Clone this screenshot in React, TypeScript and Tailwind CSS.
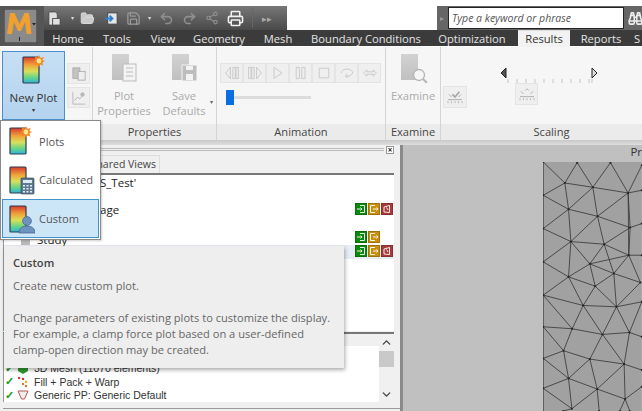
import { Binoculars, ChevronDown, ChevronUp, FolderOpen, Printer, Redo2, Save, Share2, Undo2 } from "lucide-react";

const nodes: Record<string, [number, number]> = {
  A: [705, 128], B: [789, 141], C: [895, 158], D: [716, 207], E: [803, 228], F: [901, 262], G: [723, 304],
  H: [823, 312], I: [897, 345], J: [780, 371], K: [852, 400], L: [932, 427], M: [716, 410], N: [796, 438],
  O: [760, 496], P: [860, 500], Q: [936, 485], R: [727, 566], S: [818, 583], T: [899, 577], U: [701, 632],
  V: [780, 657], W: [883, 672], X: [716, 715], Y: [802, 747], Z: [886, 777], a: [726, 806],
  t0: [640, 65], t1: [742, 67], t2: [842, 67], t3: [936, 75], e1: [640, 165], e2: [640, 265], e3: [640, 365],
  e4: [640, 465], e5: [640, 560], e6: [640, 655], e7: [640, 745], r1: [936, 150], r2: [936, 250], r3: [936, 345],
  r4: [936, 590], r5: [936, 690], r6: [936, 740], b1: [700, 813], b2: [808, 813], b3: [870, 813], b4: [900, 813],
};

const edges =
  "t0-A t1-A t1-B t2-B t2-C t3-C e1-A e1-D A-D A-B B-C B-D B-E C-E C-F E-D E-F D-G D-e2 e2-G G-E E-H F-H G-H H-I F-I C-I G-e3 e3-M M-G G-J H-J H-K J-K J-I I-K K-L I-L M-J J-N K-N M-N M-e4 e4-O M-O O-N N-P K-P L-P P-Q O-P e4-R O-R R-e5 R-U R-S O-S P-S P-T S-T Q-T e5-U U-e6 U-V S-V U-X V-X S-W T-W V-W e6-X X-e7 X-Y V-Y W-Y W-Z Y-Z X-a e7-a I-r3 F-r2 C-r1 T-r4 W-r5 Z-r6 a-b1 Y-b2 Z-b3 Z-b4 Y-a";

function Mesh() {
  return (
    <svg viewBox="640 65 296 748" className="h-[249px] w-[99px] shrink-0">
      <rect x="640" y="65" width="296" height="748" fill="#a1a1a1" />
      <path d="M640 65V813" stroke="#444" strokeWidth="3" fill="none" />
      {edges.split(" ").map((e) => {
        const [p, q] = e.split("-");
        return <line key={e} x1={nodes[p][0]} y1={nodes[p][1]} x2={nodes[q][0]} y2={nodes[q][1]} stroke="#333" strokeWidth="2.4" />;
      })}
      {Object.values(nodes).map(([x, y]) => (
        <circle key={`${x}-${y}`} cx={x} cy={y} r="3" fill="#222" />
      ))}
    </svg>
  );
}

function Rainbow({ id }: { id: string }) {
  return (
    <linearGradient id={id} x1="0" y1="0" x2="0" y2="1">
      <stop offset="0" stopColor="#d9392f" />
      <stop offset="0.3" stopColor="#f0a23a" />
      <stop offset="0.55" stopColor="#d8e05a" />
      <stop offset="0.8" stopColor="#62d48a" />
      <stop offset="1" stopColor="#2fb4dc" />
    </linearGradient>
  );
}

function Burst({ x, y }: { x: number; y: number }) {
  return (
    <g transform={`translate(${x} ${y})`}>
      <path d="M0-6 1.6-3 5-4 3.4-1 6 0 3.4 1.4 4.4 4.6 1.4 3.4 0 6-1.4 3.4-4.4 4.6-3.4 1.4-6 0-3.4-1-4.4-4.4-1.4-3.4Z" fill="#ef8a2c" />
      <circle r="2.4" fill="#ffe68a" />
    </g>
  );
}

function PlotIcon({ kind, id }: { kind: "burst" | "calc" | "user"; id: string }) {
  return (
    <svg viewBox="0 0 28 30" className="h-[30px] w-[28px] shrink-0">
      <defs>
        <Rainbow id={id} />
      </defs>
      <rect x="3" y="2" width="16" height="26" rx="1" fill={`url(#${id})`} stroke="#2c3c4c" strokeWidth="1.2" />
      {kind === "burst" && <Burst x={19} y={6} />}
      {kind === "calc" && (
        <g>
          <rect x="14" y="13" width="13" height="16" rx="1" fill="#5b7a94" stroke="#334" strokeWidth="0.6" />
          <rect x="16" y="15" width="9" height="3" fill="#dfe9f0" />
          <path d="M16 20h2v1.6h-2zM19.5 20h2v1.6h-2zM23 20h2v1.6h-2zM16 23h2v1.6h-2zM19.5 23h2v1.6h-2zM23 23h2v1.6h-2zM16 26h2v1.6h-2zM19.5 26h2v1.6h-2zM23 26h2v1.6h-2z" fill="#e8eef3" />
        </g>
      )}
      {kind === "user" && (
        <g fill="#6f93c0" stroke="#3d5f8c" strokeWidth="0.7">
          <circle cx="20" cy="17" r="4.4" />
          <path d="M12 29c0-5 3.5-7 8-7s8 2 8 7Z" />
        </g>
      )}
    </svg>
  );
}

function GhostBtn({ className, children }: { className: string; children?: React.ReactNode }) {
  return <div className={`flex items-center justify-center border border-[#e4e4e4] bg-[#efefef] ${className}`}>{children}</div>;
}

function GhostPage({ children }: { children?: React.ReactNode }) {
  return (
    <svg viewBox="0 0 30 30" className="h-[30px] w-[30px]">
      <defs>
        <linearGradient id="page" x1="0" y1="0" x2="0" y2="1">
          <stop offset="0" stopColor="#d2d2d2" />
          <stop offset="1" stopColor="#c0c0c0" />
        </linearGradient>
      </defs>
      <rect x="3" y="1" width="17" height="26" fill="url(#page)" />
      {children}
    </svg>
  );
}

function Badge({ color, kind }: { color: string; kind: "in" | "out" | "x" }) {
  return (
    <div className={`flex h-[12px] w-[12px] items-center justify-center border border-[#00000030] ${color}`}>
      <svg viewBox="0 0 10 10" className="h-[10px] w-[10px]" fill="none" stroke="#fff" strokeWidth="0.9">
        {kind === "in" && <path d="M4 1.5h4.5v7H4M1 5h5M4.5 3.5 6 5 4.500 6.5" />}
        {kind === "out" && <path d="M6 1.500H1.500v7H6M4 5h5M7.500 3.500 9 5 7.500 6.500" />}
        {kind === "x" && <path d="M2 3 7.500 1.500v7L2 8ZM4.500 3.500 6 6" />}
      </svg>
    </div>
  );
}

function Badges({ count }: { count: number }) {
  return (
    <div className="ml-auto flex gap-[1px] self-start pr-[1px]">
      <Badge color="bg-[#0d8a0d]" kind="in" />
      <Badge color="bg-[#c98f10]" kind="out" />
      {count === 3 ? <Badge color="bg-[#a83a3a]" kind="x" /> : <div className="w-[12px]" />}
    </div>
  );
}

function Tab({ w, label }: { w: string; label: string }) {
  return <div className={`flex items-center justify-center pt-[1px] text-[#e4e4e4] ${w}`}>{label}</div>;
}

function Group({ w, label, children }: { w: string; label: string; children?: React.ReactNode }) {
  return (
    <div className={`flex shrink-0 flex-col border-r border-[#d4d4d4] ${w}`}>
      <div className="h-[77px]">{children}</div>
      <div className="flex h-[16px] items-center justify-center bg-[#ebebeb] text-[#444]">{label}</div>
    </div>
  );
}

function MenuItem({ kind, label, selected }: { kind: "burst" | "calc" | "user"; label: string; selected?: boolean }) {
  return (
    <div className={`flex h-[39px] items-center gap-[4px] ${selected ? "border border-[#3f94cc] bg-[#cde6f7] pl-[4px]" : "pl-[5px]"}`}>
      <PlotIcon kind={kind} id={`menu-${kind}`} />
      <span className="text-[#555]">{label}</span>
    </div>
  );
}

export default function App() {
  return (
    <div className="relative flex h-[411px] w-[642px] flex-col overflow-hidden bg-white font-['Open_Sans',sans-serif] text-[11.1px] leading-none">
      {/* title bar + tabs */}
      <div className="flex h-[47px] shrink-0">
        <div className="flex w-[44px] shrink-0 flex-col pt-[6px]">
          <div className="flex h-[40px] items-center bg-[#555] pl-[4px]">
            <svg viewBox="0 0 33 34" className="h-[34px] w-[33px]">
              <rect width="33" height="34" fill="#8a8a8a" stroke="#333" />
              <path d="M3 25 6 4h4.500l5 11 5-11H25l2.500 21h-5L21 13l-4 9h-3L10 13 8 25Z" fill="#f0a02e" />
              <path d="M15.500 28v4" stroke="#222" />
              <path d="M28 14h4l-2 2.500Z" fill="#222" />
            </svg>
          </div>
        </div>
        <div className="flex min-w-0 flex-1 flex-col">
          <div className="flex h-[30px] shrink-0 items-end">
            <div className="flex h-[24px] w-[243px] shrink-0 items-center bg-gradient-to-b from-[#777] to-[#4a4a4a] pl-[4px] text-[#dcdcdc]">
              <svg viewBox="0 0 14 16" className="h-[15px] w-[13px]" fill="#e0e0e0" stroke="#444" strokeWidth="0.8">
                <path d="M1 1h7l2 2v5H5v7H1Z" />
                <path d="M5 8h8v7H5Z" />
              </svg>
              <span className="ml-[10px] text-[6px]">▾</span>
              <FolderOpen size={15} className="ml-[6px]" fill="#c9c9c9" strokeWidth={1.5} />
              <svg viewBox="0 0 16 16" className="ml-[9px] h-[15px] w-[15px]">
                <rect x="4" y="2" width="10" height="12" fill="#e6e6e6" stroke="#444" />
                <path d="M1 8h7M6 5l3 3-3 3" stroke="#2b7fd0" strokeWidth="2" fill="none" />
              </svg>
              <Save size={15} className="ml-[7px] text-[#9a9a9a]" />
              <span className="ml-[7px] text-[6px]">▾</span>
              <Undo2 size={15} className="ml-[8px] text-[#8f8f8f]" strokeWidth={2.5} />
              <Redo2 size={15} className="ml-[8px] text-[#8f8f8f]" strokeWidth={2.5} />
              <Share2 size={14} className="ml-[8px] text-[#8f8f8f]" />
              <Printer size={17} className="ml-[8px] text-[#f2f2f2]" strokeWidth={2.2} />
              <div className="ml-[8px] h-[20px] w-px bg-[#666]" />
              <span className="ml-[9px] text-[9px] text-[#aaa]">▸▸</span>
            </div>
            <div className="w-[150px] shrink-0" />
            <div className="flex h-[24px] flex-1 items-center bg-[#666]">
              <span className="ml-[3px] text-[8px] text-[#999]">▸</span>
              <div className="ml-[4px] flex h-[22px] w-[176px] shrink-0 items-center border border-[#222] bg-white pl-[3px] text-[10.5px] italic text-[#555]">
                Type a keyword or phrase
              </div>
              <Binoculars size={15} className="ml-[4px] text-[#eee]" strokeWidth={2.5} />
            </div>
          </div>
          <div className="flex h-[16px] bg-[#3b3b3b] text-[11.2px]">
            <Tab w="w-[48px]" label="Home" />
            <Tab w="w-[50px]" label="Tools" />
            <Tab w="w-[42px]" label="View" />
            <Tab w="w-[70px]" label="Geometry" />
            <Tab w="w-[48px]" label="Mesh" />
            <Tab w="w-[128px]" label="Boundary Conditions" />
            <Tab w="w-[84px]" label="Optimization" />
            <div className="ml-[4px] flex h-[17px] w-[52px] items-center justify-center border-t border-[#ddd] bg-[#f2f2f2] text-[#333]">Results</div>
            <Tab w="w-[62px]" label="Reports" />
            <Tab w="w-[10px]" label="S" />
          </div>
        </div>
      </div>

      {/* ribbon */}
      <div className="flex h-[93px] shrink-0 bg-[#f6f6f6]">
        <div className="flex w-[93px] shrink-0 flex-col border-r border-[#d4d4d4]">
          <div className="flex h-[77px] items-start pl-[2px] pt-[4px]">
            <div className="flex h-[69px] w-[63px] shrink-0 flex-col items-center border border-[#4a90d0] bg-gradient-to-b from-[#c6dff4] to-[#b4d3ee] pt-[3px] text-[11.5px] text-[#333]">
              <PlotIcon kind="burst" id="ribbon-burst" />
              <span className="mt-[7px]">New Plot</span>
              <span className="mt-[3px] text-[6px]">▾</span>
            </div>
            <div className="ml-[2px] mt-[12px] flex flex-col gap-[3px]">
              <GhostBtn className="h-[21px] w-[23px]">
                <svg viewBox="0 0 16 16" className="h-[14px] w-[14px]" fill="#c4c4c4" stroke="#aaa">
                  <rect x="1" y="1" width="8" height="12" />
                  <rect x="7" y="5" width="8" height="10" fill="#eee" />
                </svg>
              </GhostBtn>
              <GhostBtn className="h-[21px] w-[23px]">
                <svg viewBox="0 0 16 16" className="h-[14px] w-[14px]" fill="none" stroke="#b4b4b4">
                  <path d="M1 1v14h14M3 11l3-4 3 2 3-4" />
                  <circle cx="12" cy="4" r="2" fill="#bbb" />
                </svg>
              </GhostBtn>
            </div>
          </div>
          <div className="h-[16px] bg-[#ebebeb]" />
        </div>
        <Group w="w-[124px]" label="Properties">
          <div className="flex pt-[6px] text-center text-[#aaa]">
            <div className="flex w-[62px] shrink-0 flex-col items-center">
              <GhostPage>
                <rect x="14" y="11" width="13" height="17" fill="#f3f3f3" stroke="#bbb" />
                <path d="M17 15h7M17 19h7M17 23h7" stroke="#bbb" />
              </GhostPage>
              <span className="mt-[7px]">Plot</span>
              <span className="mt-[4px] whitespace-nowrap">Properties</span>
            </div>
            <div className="ml-[4px] flex w-[50px] shrink-0 flex-col items-center">
              <GhostPage>
                <rect x="13" y="12" width="15" height="16" fill="#bdbdbd" stroke="#f6f6f6" />
                <rect x="17" y="13" width="7" height="4" fill="#f3f3f3" />
                <rect x="17" y="21" width="7" height="6" fill="#f3f3f3" />
              </GhostPage>
              <span className="mt-[7px]">Save</span>
              <span className="mt-[4px]">Defaults</span>
            </div>
            <span className="ml-[1px] mt-[46px] text-[6px] text-[#666]">▾</span>
          </div>
        </Group>
        <Group w="w-[169px]" label="Animation">
          <div className="flex flex-col pl-[3px] pt-[16px]">
            <div className="flex">
              {[
                "M9 3 3 10l6 7ZM12 3h3v14h-3ZM16 3h3v14h-3Z",
                "M3 3h3v14H3ZM7 3h3v14H7ZM13 3l6 7-6 7Z",
                "M6 3l10 7-10 7Z",
                "M5 3h4v14H5ZM12 3h4v14h-4Z",
                "M5 4h12v12H5Z",
                "M4 10a7 5 0 0 1 14 0 7 5 0 0 1-8 4M11 11l-2 3 3 2",
                "M3 10l4-4v2.500h8V6l4 4-4 4v-2.500H7V14Z",
              ].map((d) => (
                <GhostBtn key={d} className="h-[20px] w-[23px]">
                  <svg viewBox="0 0 22 20" className="h-[16px] w-[18px]" fill="none" stroke="#c2c2c2">
                    <path d={d} />
                  </svg>
                </GhostBtn>
              ))}
            </div>
            <div className="ml-[6px] mt-[7px] flex items-center">
              <div className="h-[15px] w-[8px] bg-[#0a6ee0]" />
              <div className="h-[3px] w-[77px] bg-[#dcdcdc]" />
            </div>
          </div>
        </Group>
        <Group w="w-[55px]" label="Examine">
          <div className="flex flex-col items-center pt-[6px] text-[#aaa]">
            <GhostPage>
              <circle cx="21" cy="22" r="5.500" fill="#f6f6f6" stroke="#b4b4b4" strokeWidth="1.300" />
              <path d="M25 26l4 4" stroke="#b4b4b4" strokeWidth="2" />
            </GhostPage>
            <span className="mt-[7px]">Examine</span>
          </div>
        </Group>
        <div className="flex min-w-0 flex-1 flex-col">
          <div className="flex h-[77px] items-start pl-[2px] pt-[39px]">
            <GhostBtn className="h-[22px] w-[24px]">
              <svg viewBox="0 0 20 16" className="h-[14px] w-[18px]" fill="none" stroke="#a8a8a8">
                <path d="M2 11h16M2 13v2M6 13v2M10 13v2M14 13v2M18 13v2M3 5l3 3M17 5l-3 3" />
                <path d="M7 5l3 3 5-6" strokeWidth="2" />
              </svg>
            </GhostBtn>
            <div className="ml-[33px] -mt-[18px] flex flex-col">
              <svg viewBox="0 0 97 15" className="h-[15px] w-[97px]">
                <path d="M6 0 1 5l5 5Z" fill="#555" stroke="#222" />
                <path d="M92 0l5 5-5 5Z" fill="#ddd" stroke="#222" />
                <path d="M8 11v4M17 11v4M26 11v4M35 11v4M44 11v4M53 11v4M62 11v4M71 11v4M80 11v4M89 11v4M92 11v4" stroke="#c4c4c4" />
              </svg>
              <GhostBtn className="ml-[15px] h-[22px] w-[23px]">
                <svg viewBox="0 0 20 16" className="h-[14px] w-[18px]" fill="none" stroke="#a8a8a8">
                  <path d="M2 11h16M2 13v2M6 13v2M10 13v2M14 13v2M18 13v2M3 5l3 3M17 5l-3 3M8 4l2-2 2 2" />
                </svg>
              </GhostBtn>
            </div>
          </div>
          <div className="flex h-[16px] items-center justify-center bg-[#ebebeb] pl-[20px] text-[#444]">Scaling</div>
        </div>
      </div>

      <div className="h-[5px] shrink-0 bg-gradient-to-b from-[#c8c8c8] to-[#dedede]" />

      {/* panels */}
      <div className="flex min-h-0 flex-1">
        <div className="flex w-[400px] shrink-0 flex-col bg-[#f0f0f0] pl-[3px]">
          <div className="flex h-[9px] shrink-0 items-center pr-[6px]">
            <div className="h-[3px] flex-1 border-y border-[#bbb]" />
            <div className="ml-[2px] flex h-[8px] w-[8px] items-center justify-center border border-[#999] bg-white text-[8px] font-bold text-[#222]">×</div>
          </div>
          <div className="flex h-[19px] shrink-0 items-end pl-[82px] pt-[1px]">
            <div className="flex h-[18px] w-[75px] items-center justify-end border-x border-t border-[#ddd] pr-[3px] text-[10.5px] text-[#444]">Shared Views</div>
          </div>
          <div className="mr-[6px] h-[158px] shrink-0 border-t-2 border-l border-[#777] border-l-[#999] bg-white text-[11.5px] text-[#222]">
            <div className="flex h-[14px] items-center pl-[96px] pt-[1px]">S_Test'</div>
            <div className="h-[14px]" />
            <div className="flex h-[14px] items-center pl-[96px]">
              age
              <Badges count={3} />
            </div>
            <div className="h-[14px]" />
            <div className="flex h-[14px] items-center pl-[17px]">
              <div className="mr-[7px] mt-[4px] h-[10px] w-[9px] bg-[#bbb]" />
              <span className="mt-[4px]">Study</span>
              <Badges count={2} />
            </div>
            <div className="flex h-[14px] items-center bg-[#e8edf5]">
              <Badges count={3} />
            </div>
          </div>
          <div className="mr-[6px] mt-[1px] flex h-[70px] shrink-0 border-t-2 border-l border-[#777] border-l-[#999] bg-white font-['Liberation_Sans',sans-serif] text-[10.5px] text-[#333]">
            <div className="flex min-w-0 flex-1 flex-col">
              <div className="h-[12px] bg-[#f0f0f0]" />
              <div className="h-[17px]" />
              {[
                { label: "3D Mesh (11070 elements)", icon: "mesh" },
                { label: "Fill + Pack + Warp", icon: "fill" },
                { label: "Generic PP: Generic Default", icon: "pp" },
              ].map((row) => (
                <div key={row.label} className="flex h-[14px] items-center">
                  <span className="ml-[1px] w-[9px] text-center text-[11px] font-bold text-[#1a9a2a]">✓</span>
                  <svg viewBox="0 0 12 12" className="ml-[3px] h-[12px] w-[12px] shrink-0">
                    {row.icon === "mesh" && <path d="M6 1l5 3v5l-5 3-5-3V4Z" fill="#2f9a2f" />}
                    {row.icon === "fill" && (
                      <g fill="#d9752c">
                        <circle cx="2" cy="2" r="1.200" fill="#c33" />
                        <circle cx="6" cy="3" r="1.200" fill="#c33" />
                        <circle cx="9" cy="6" r="1.200" fill="#eab02c" />
                        <circle cx="6" cy="8" r="1.200" />
                        <circle cx="9" cy="10" r="1.200" />
                      </g>
                    )}
                    {row.icon === "pp" && <path d="M1 2h10L7.500 10h-3Z" fill="#eee" stroke="#b55" />}
                  </svg>
                  <span className="ml-[5px]">{row.label}</span>
                </div>
              ))}
            </div>
            <div className="flex w-[15px] shrink-0 flex-col items-center bg-[#f0f0f0] pt-[2px] text-[#444]">
              <ChevronUp size={13} strokeWidth={2.5} />
              <div className="mt-[2px] h-[16px] w-full bg-[#c9c9c9]" />
              <ChevronDown size={13} strokeWidth={2.5} className="mt-[21px]" />
            </div>
          </div>
          <div className="mt-[6px] h-[1px] shrink-0 bg-[#999]" />
        </div>
        <div className="flex min-w-0 flex-1 border-l-[3px] border-[#8a8a8a] bg-[#c0c0c0]">
          <div className="flex-1 pl-[140px] pt-[17px]">
            <Mesh />
          </div>
          <span className="absolute right-0 top-[146px] text-[11.5px] text-[#333]">Pr</span>
        </div>
      </div>

      {/* New Plot dropdown */}
      <div className="absolute left-0 top-[120px] flex h-[120px] w-[101px] flex-col border border-[#8a8a8a] bg-white p-[1px] shadow-[1px_1px_2px_#0003]">
        <MenuItem kind="burst" label="Plots" />
        <MenuItem kind="calc" label="Calculated" />
        <MenuItem kind="user" label="Custom" selected />
      </div>

      {/* tooltip */}
      <div className="absolute left-[4px] top-[246px] flex h-[122px] w-[340px] flex-col bg-[#eeeeee] pl-[9px] pt-[9px] text-[11.1px] leading-[16px] text-[#666] shadow-[1px_2px_4px_#0005]">
        <div className="font-semibold text-[#444]">Custom</div>
        <div className="mt-[7px]">Create new custom plot.</div>
        <div className="mt-[16px]">Change parameters of existing plots to customize the display.</div>
        <div>For example, a clamp force plot based on a user-defined</div>
        <div>clamp-open direction may be created.</div>
      </div>
    </div>
  );
}
